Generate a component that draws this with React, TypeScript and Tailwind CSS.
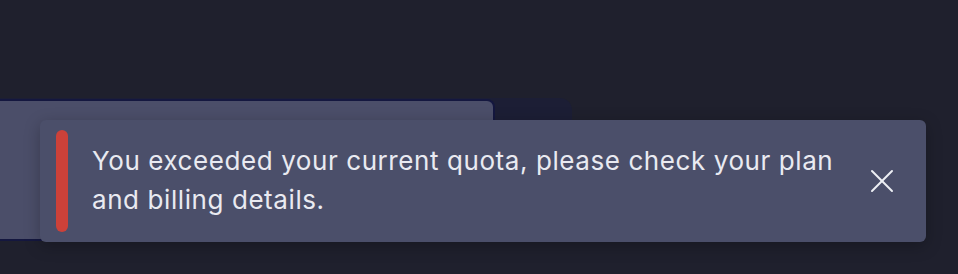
import React from 'react'
import { X } from 'lucide-react'

const App = () => {
    return (
        <main className="relative w-[958px] h-[274px] overflow-hidden bg-[#1f202d]" style={{ fontFamily: 'Inter, "Noto Sans", sans-serif' }}>
            {/* panels behind the toast */}
            <div className="absolute left-0 top-[98px] w-[572px] h-[60px] bg-[#1c1e35] rounded-tr-[12px]" />
            <div className="absolute left-0 top-[99px] w-[495px] h-[142px] bg-[#4b4e69] border-t-2 border-b-2 border-r-2 border-[#14173f] rounded-tr-[8px]" />

            {/* toast */}
            <div className="absolute left-[40px] top-[120px] w-[886px] h-[122px] bg-[#4b4f6a] rounded-[6px] shadow-[0_4px_16px_rgba(0,0,0,0.25)] flex items-center pl-4 pr-[24px]">
                <div className="w-3 h-[102px] rounded-full bg-[#cc4139] shrink-0" />
                <p className="ml-6 flex-1 text-[26px] leading-[39px] text-[#e9eaf1] tracking-[0.58px] pb-[2px]">
                    You exceeded your current quota, please check your plan
                    <br />
                    and billing details.
                </p>
                <button className="text-[#eef0f5] shrink-0">
                    <X size={40} strokeWidth={1.2} />
                </button>
            </div>
        </main>
    )
}

export default App
